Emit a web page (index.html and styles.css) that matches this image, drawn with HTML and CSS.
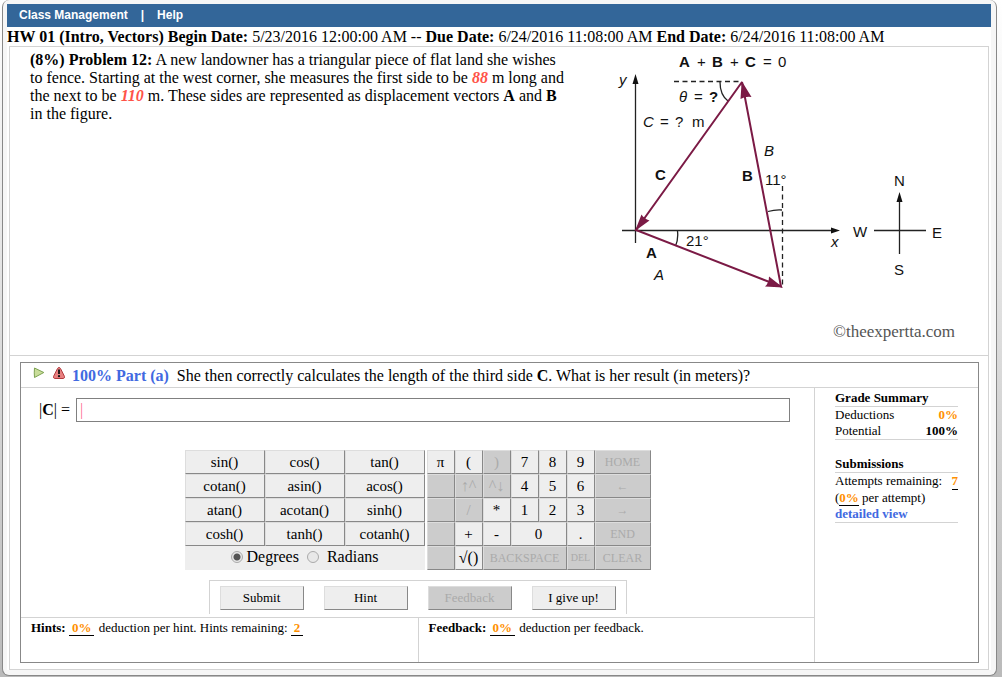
FILE: index.html
```html
<!DOCTYPE html>
<html lang="en">
<head>
<meta charset="utf-8">
<title>HW 01 (Intro, Vectors)</title>
<link rel="stylesheet" href="styles.css">
</head>
<body>
<div class="frame">
<div class="page">
  <nav class="menu"><a href="#">Class Management</a><span>|</span><a href="#">Help</a></nav>
  <p class="dates"><b>HW 01 (Intro, Vectors) Begin Date:</b> 5/23/2016 12:00:00 AM -- <b>Due Date:</b> 6/24/2016 11:08:00 AM <b>End Date:</b> 6/24/2016 11:08:00 AM</p>
  <main class="sheet">
    <section class="problem">
      <p class="statement"><b>(8%) Problem 12:</b> A new landowner has a triangular piece of flat land she wishes to fence. Starting at the west corner, she measures the first side to be <em>88</em> m long and the next to be <em>110</em> m. These sides are represented as displacement vectors <b>A</b> and <b>B</b> in the figure.</p>
      <svg class="figure" viewBox="612 47 350 308" role="img" aria-label="Vector triangle with compass">
        <g fill="none" stroke="#222" stroke-width="1.3">
          <path d="M635.500 243V84M622 230.500H832"/>
          <path d="M674 81.500H742M782.500 186V288" stroke-dasharray="5 3.500"/>
          <path d="M720 82Q720 95 728 101M677.500 231Q678.500 239 675.500 246M768 211.500Q775 209.500 782 210"/>
          <path d="M899.500 254V200M874 230.500H926"/>
        </g>
        <g fill="#111">
          <path d="M635.500 74L632.500 84H638.500ZM840 230.500L831 227.500V233.500ZM899.500 192L896.500 202H902.500Z"/>
        </g>
        <path d="M742 82L636 230L781 286.500L742 82" fill="none" stroke="#7b1a45" stroke-width="2"/>
        <path d="M635 231L641.500 214.500Q644 218.500 649.500 220.500ZM741.700 81L740.500 99Q746 96 751.500 97ZM783 287.500L765 286.500Q769 283 769 276.500Z" fill="#7b1a45"/>
        <g class="label">
          <text y="67"><tspan x="679" class="bold">A</tspan><tspan x="697">+</tspan><tspan x="712" class="bold">B</tspan><tspan x="730">+</tspan><tspan x="745" class="bold">C</tspan><tspan x="763">=</tspan><tspan x="778">0</tspan></text>
          <text x="619" y="85" class="slant">y</text>
          <text y="102"><tspan x="679" class="slant">θ</tspan><tspan x="694">=</tspan><tspan x="709" class="bold">?</tspan></text>
          <text y="127"><tspan x="643" class="slant">C</tspan><tspan x="660">=</tspan><tspan x="675">?</tspan><tspan x="692">m</tspan></text>
          <text x="764" y="156" class="slant">B</text>
          <text x="655" y="180" class="bold">C</text>
          <text x="742" y="181" class="bold">B</text>
          <text x="765" y="185">11°</text>
          <text x="686" y="246">21°</text>
          <text x="646" y="258" class="bold">A</text>
          <text x="654" y="280" class="slant">A</text>
          <text x="831" y="247" class="slant">x</text>
          <text x="894" y="186">N</text>
          <text x="853" y="237">W</text>
          <text x="932" y="238">E</text>
          <text x="894" y="275">S</text>
        </g>
        <text x="833" y="337" class="credit">©theexpertta.com</text>
      </svg>
    </section>
    <section class="part">
      <h2 class="part-head">
        <svg class="icon" viewBox="0 0 14 14" aria-hidden="true"><path d="M2.500 2Q2 7 2.500 11.500L11.800 6.500Z" fill="#c9dd9a" stroke="#7da252" stroke-linejoin="round"/></svg>
        <svg class="icon" viewBox="0 0 14 14" aria-hidden="true"><path d="M7 1.500Q8 1.500 8.500 2.500L12.500 10.500Q12.500 12.500 11.500 12.500H2.500Q1.500 12.500 1.500 10.500L5.500 2.500Q6 1.500 7 1.500Z" fill="#e88080" stroke="#b23a3e"/><path d="M7 3.500V8" stroke="#111" stroke-width="1.800"/><circle cx="7" cy="10.200" r="1.100" fill="#111"/></svg>
        <span class="part-name">100% Part (a)</span>
        <span class="ask">She then correctly calculates the length of the third side <b>C</b>. What is her result (in meters)?</span>
      </h2>
      <div class="part-body">
        <div class="work">
          <div class="answer">
            <label for="answer">|<b>C</b>| =</label>
            <input id="answer" class="answer-box" type="text" value="|">
          </div>
          <div class="pads">
            <div class="functions">
              <button>sin()</button><button>cos()</button><button>tan()</button>
              <button>cotan()</button><button>asin()</button><button>acos()</button>
              <button>atan()</button><button>acotan()</button><button>sinh()</button>
              <button>cosh()</button><button>tanh()</button><button>cotanh()</button>
              <div class="modes">
                <input type="radio" name="mode" id="deg" checked><label for="deg">Degrees</label>
                <input type="radio" name="mode" id="rad"><label for="rad">Radians</label>
              </div>
            </div>
            <div class="keys">
              <button>π</button><button>(</button><button disabled>)</button><button>7</button><button>8</button><button>9</button><button class="word" disabled>HOME</button>
              <button disabled aria-label="blank"></button><button class="arrow" disabled>↑^</button><button class="arrow" disabled>^↓</button><button>4</button><button>5</button><button>6</button><button class="word" disabled>←</button>
              <button disabled aria-label="blank"></button><button disabled>/</button><button>*</button><button>1</button><button>2</button><button>3</button><button class="word" disabled>→</button>
              <button disabled aria-label="blank"></button><button>+</button><button>-</button><button class="two">0</button><button>.</button><button class="word" disabled>END</button>
              <button disabled aria-label="blank"></button><button class="root">√()</button><button class="word three" disabled>BACKSPACE</button><button class="tiny" disabled>DEL</button><button class="word" disabled>CLEAR</button>
            </div>
          </div>
          <div class="actions">
            <button>Submit</button><button>Hint</button><button class="off" disabled>Feedback</button><button>I give up!</button>
          </div>
          <div class="notes">
            <p><b>Hints:</b> <span class="amount pad">0%</span> deduction per hint. Hints remaining: <span class="amount pad">2</span></p>
            <p><b>Feedback:</b> <span class="amount pad">0%</span> deduction per feedback.</p>
          </div>
        </div>
        <aside class="summary">
          <h3>Grade Summary</h3>
          <div class="block">
            <div class="row"><span>Deductions</span><b class="orange">0%</b></div>
            <div class="row"><span>Potential</span><b>100%</b></div>
          </div>
          <h3>Submissions</h3>
          <div class="block">
            <div class="row"><span>Attempts remaining:</span><span class="amount">7</span></div>
            <div>(<span class="amount">0%</span> per attempt)</div>
            <a href="#">detailed view</a>
          </div>
        </aside>
      </div>
    </section>
  </main>
</div>
</div>
</body>
</html>
```
FILE: styles.css
```css
* { box-sizing: border-box; }
html { min-height: 100%; background: linear-gradient(#ffffff, #bababa); }
body { margin: 0; padding: 0 5px 1px 2px; font: 16px/18px "Liberation Serif", serif; color: #000; }
p, h2, h3 { margin: 0; }
a { text-decoration: none; }
button, input { font: inherit; color: inherit; margin: 0; }

.frame { padding: 4px 5px 5px 4px; background: #f6f6f6; border: 1px solid #888; border-top: 0; border-radius: 7px; }
.page { background: #fff; padding: 0 2px 0; }
.menu { display: flex; gap: 13px; margin: 0 -2px; padding: 0 12px; background: #336699; color: #fff; font: bold 12px/23px "Liberation Sans", sans-serif; }
.menu a { color: #fff; }
.dates { margin: 0 -2px; padding-top: 1px; white-space: nowrap; }
.sheet { border: 1px solid #d3d3d3; }
.problem { display: flex; justify-content: space-between; padding-right: 26px; border-bottom: 1px solid #d3d3d3; }
.statement { width: 572px; padding: 4px 10px 0 20px; }
.statement em { color: #ff5347; font-weight: bold; }
.figure { flex: none; display: block; width: 350px; height: 308px; }
.label { font: 15px "Liberation Sans", sans-serif; fill: #111; }
.bold { font-weight: bold; }
.slant { font-style: italic; }
.credit { font: 17px "Liberation Serif", serif; fill: #555; }

.part { margin: 6px 9px 6px 10px; border: 1px solid #888; }
.part-head { display: flex; align-items: center; height: 25px; padding-left: 11px; border-bottom: 1px solid #d3d3d3; font-size: 16px; font-weight: normal; }
.icon { width: 14px; height: 14px; margin-right: 6px; margin-bottom: 4px; }
.part-name { color: #4169e1; font-weight: bold; margin-right: 8px; }
.part-head span { padding-top: 2px; }
.part-body { display: flex; align-items: stretch; }
.work { flex: 1; border-right: 1px solid #d3d3d3; }
.answer { display: flex; align-items: center; gap: 6px; padding: 10px 24px 0 18px; }
.answer-box { flex: 1; height: 24px; border: 1px solid #808080; padding: 1px 3px; color: #ff6f91; background: #fff; }

.pads { display: flex; justify-content: center; gap: 2px; margin: 28px 0 10px; font-size: 15px; }
.pads button { height: 24px; padding: 0; border: 1px solid; border-color: #ddd #888 #888 #ddd; background: #eee; line-height: 20px; text-align: center; }
.pads button:disabled { background: #ccc; color: #aaa; }
.functions { display: grid; grid-template-columns: repeat(3, 80px); grid-auto-rows: 24px; background: #eee; }
.keys { display: grid; grid-template-columns: repeat(6, 28px) 56px; grid-auto-rows: 24px; }
.modes { grid-column: span 3; display: flex; justify-content: center; align-items: center; gap: 4px; padding-bottom: 3px; font-size: 16px; }
.modes input { appearance: none; width: 12px; height: 12px; border: 1px solid #aaa; border-radius: 50%; background: #e8e8e8; }
.modes input:checked { background: radial-gradient(circle, #555 0 3px, #e8e8e8 4px); }
.modes label { margin-right: 4px; }
.modes label:last-child { margin: 0 0 0 4px; }
.keys .word { font-size: 12px; }
.keys .arrow { font-size: 16px; }
.keys .tiny { font-size: 10px; }
.keys .two { grid-column: span 2; }
.keys .three { grid-column: span 3; }
.keys .root { font-size: 16px; }

.actions { display: flex; gap: 20px; width: 418px; margin: 0 auto; padding: 5px 10px 4px; border: 1px solid #d3d3d3; border-bottom: 0; font-size: 13px; }
.actions button { flex: 1; height: 24px; padding: 0; border: 1px solid; border-color: #ddd #888 #888 #ddd; background: #eee; }
.actions .off { background: #ccc; color: #aaa; }
.notes { display: grid; grid-template-columns: 1fr 1fr; margin-top: 3px; border-top: 1px solid #d3d3d3; font-size: 13px; }
.notes p { min-height: 44px; padding: 1px 10px 0; }
.notes p + p { border-left: 1px solid #d3d3d3; }
.amount { color: #ff9000; font-weight: bold; border-bottom: 1px solid #000; }
.orange { color: #ff9000; }
.pad { padding: 0 3px; margin-right: 1px; }

.summary { width: 163px; padding: 2px 20px 0; font-size: 13px; line-height: 16px; }
.summary h3 { font-size: 13px; line-height: 16px; border-bottom: 1px solid #d3d3d3; }
.block { margin-bottom: 16px; border-bottom: 1px solid #d3d3d3; }
.row { display: flex; justify-content: space-between; }
.summary a { color: #4169e1; font-weight: bold; }
```
